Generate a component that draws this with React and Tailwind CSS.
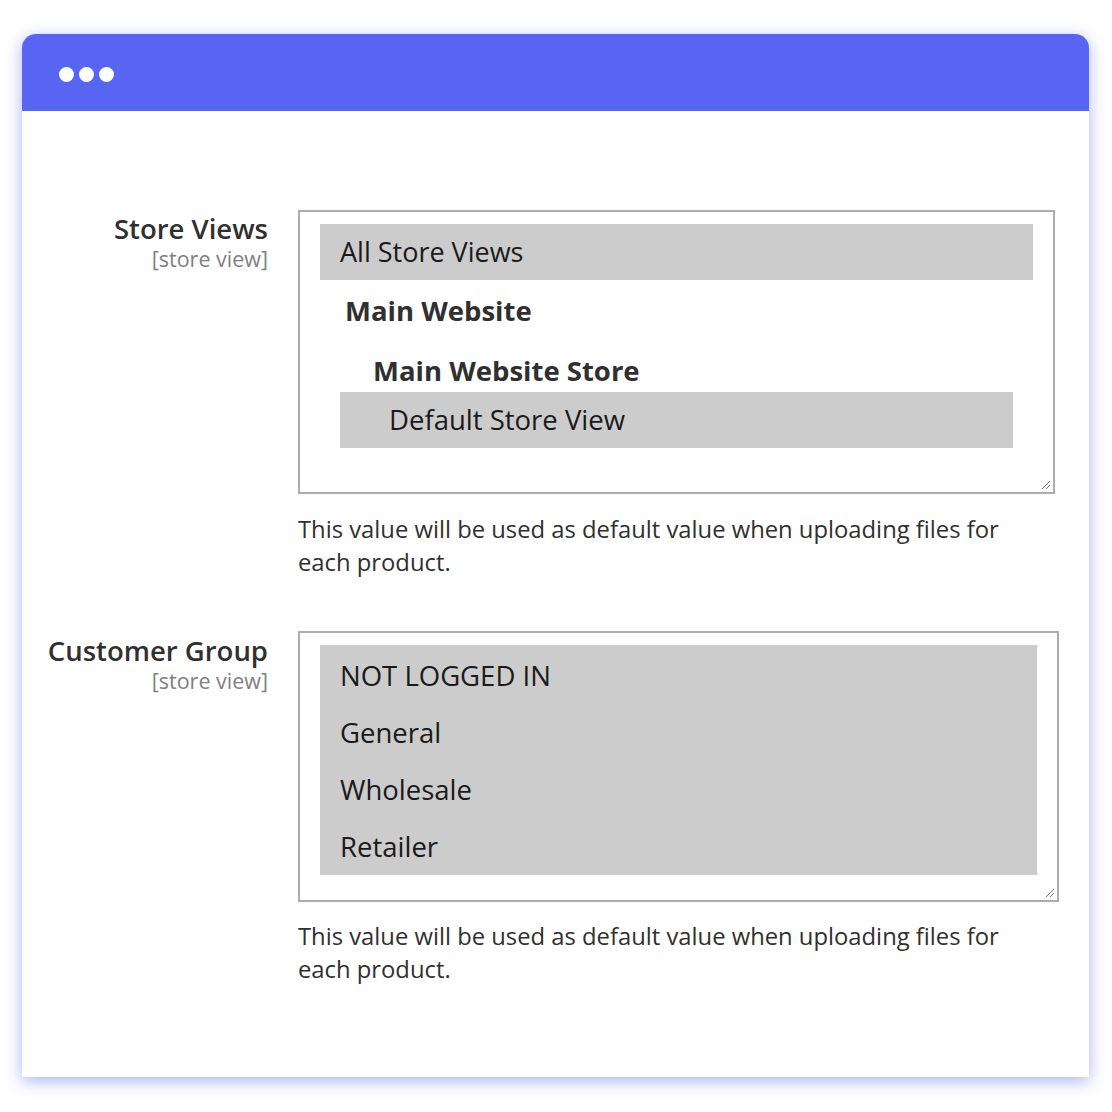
import React from 'react';

const font = { fontFamily: '"Open Sans", "Noto Sans", sans-serif' };

function ResizeGrip() {
    return (
        <svg className="absolute right-[2px] bottom-[2px]" width="12" height="12" viewBox="0 0 12 12">
            <line x1="11" y1="3" x2="3" y2="11" stroke="#777" strokeWidth="1" />
            <line x1="11" y1="7" x2="7" y2="11" stroke="#777" strokeWidth="1" />
        </svg>
    );
}

function FieldLabel({ title, offset }) {
    return (
        <div className={`w-[246px] shrink-0 text-right ${offset}`}>
            <div className="text-[27.5px] leading-[32px] font-semibold text-[#303030] whitespace-nowrap">{title}</div>
            <div className="text-[21.5px] leading-[28px] text-[#808080] whitespace-nowrap">[store view]</div>
        </div>
    );
}

function Note() {
    return (
        <p className="text-[23.8px] leading-[33px] text-[#303030] w-[720px]">
            This value will be used as default value when uploading files for each product.
        </p>
    );
}

export default function App() {
    const groups = ['NOT LOGGED IN', 'General', 'Wholesale', 'Retailer'];

    return (
        <div className="w-[1112px] h-[1112px] bg-white pt-[34px] pl-[22px]" style={font}>
            <div className="w-[1067px] h-[1043px] bg-white rounded-t-[14px] shadow-[0_4px_16px_rgba(88,101,242,0.5)] flex flex-col">
                <div className="h-[77px] bg-[#5865F2] rounded-t-[14px] flex items-center gap-[5px] pl-[37px] pt-[4px]">
                    <span className="w-[15px] h-[15px] rounded-full bg-white" />
                    <span className="w-[15px] h-[15px] rounded-full bg-white" />
                    <span className="w-[15px] h-[15px] rounded-full bg-white" />
                </div>

                <div className="flex flex-col pt-[99px]">
                    <div className="flex gap-[30px]">
                        <FieldLabel title="Store Views" offset="pt-[3px]" />
                        <div className="flex flex-col">
                            <div className="relative w-[757px] h-[284px] border-2 border-[#adadad] pt-[12px] px-[20px]">
                                <div className="h-[56px] bg-[#cccccc] flex items-center pl-[20px] text-[27px] text-[#1a1a1a]">
                                    All Store Views
                                </div>
                                <div className="h-[62px] flex items-center pl-[25px] text-[27.5px] font-bold text-[#303030]">
                                    Main Website
                                </div>
                                <div className="h-[50px] flex items-center pt-[8px] pl-[53px] text-[27.5px] font-bold text-[#303030]">
                                    Main Website Store
                                </div>
                                <div className="h-[56px] mx-[20px] bg-[#cccccc] flex items-center pl-[49px] text-[27.5px] text-[#1a1a1a]">
                                    Default Store View
                                </div>
                                <ResizeGrip />
                            </div>
                            <div className="mt-[19px]">
                                <Note />
                            </div>
                        </div>
                    </div>

                    <div className="flex gap-[30px] mt-[52px]">
                        <FieldLabel title="Customer Group" offset="pt-[4px]" />
                        <div className="flex flex-col">
                            <div className="relative w-[761px] h-[271px] border-2 border-[#adadad] pt-[12px] px-[20px]">
                                <div className="bg-[#cccccc] pt-[2px]">
                                    {groups.map(g => (
                                        <div key={g} className="h-[57px] flex items-center pl-[20px] text-[27.5px] text-[#1a1a1a]">
                                            {g}
                                        </div>
                                    ))}
                                </div>
                                <ResizeGrip />
                            </div>
                            <div className="mt-[18px]">
                                <Note />
                            </div>
                        </div>
                    </div>
                </div>
            </div>
        </div>
    );
}
